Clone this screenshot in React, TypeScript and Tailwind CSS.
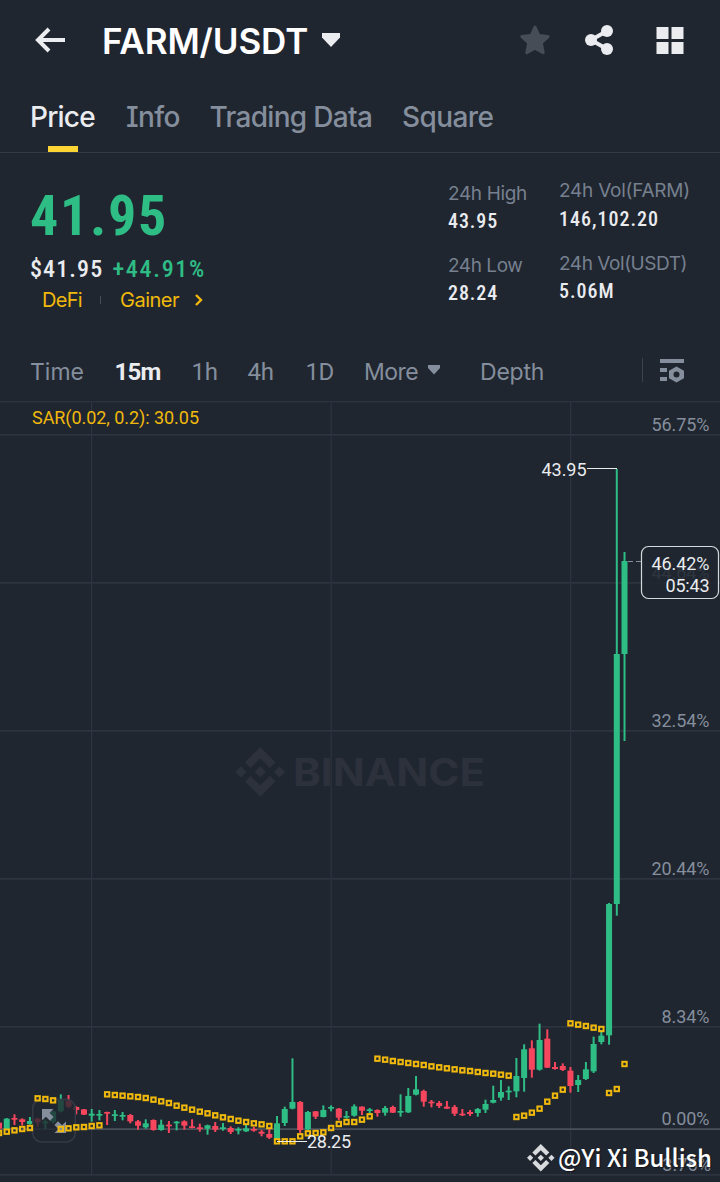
type Candle = [top: number, bottom: number, high: number, low: number, up: 0 | 1];

const STEP = 7.722;
const ORIGIN = 6.75;
const xAt = (i: number) => ORIGIN + i * STEP;

// Each group holds consecutive candles; values are thirds of a pixel below `base`.
const groups: { first: number; base: number; bars: Candle[] }[] = [
  {
    first: -1,
    base: 1040,
    bars: [
      [248, 266, 243, 268, 0],
      [236, 268, 234, 270, 1],
      [234, 239, 223, 255, 0],
      [238, 246, 235, 256, 0],
      [243, 252, 231, 254, 1],
      [236, 247, 233, 260, 0],
      [245, 250, 238, 267, 1],
      [214, 245, 212, 250, 1],
      [180, 214, 163, 217, 1],
      [182, 200, 165, 204, 0],
      [201, 210, 199, 223, 0],
      [208, 224, 207, 225, 0],
      [221, 227, 207, 245, 1],
      [222, 227, 210, 241, 1],
      [216, 221, 215, 255, 0],
      [223, 228, 210, 243, 1],
      [225, 230, 216, 241, 1],
      [225, 244, 222, 250, 0],
      [244, 257, 240, 269, 0],
      [250, 262, 238, 266, 1],
      [240, 270, 238, 272, 0],
      [254, 270, 239, 272, 1],
      [254, 259, 243, 279, 0],
      [245, 250, 243, 271, 1],
      [244, 257, 241, 269, 0],
      [259, 264, 238, 265, 0],
      [262, 267, 251, 275, 0],
      [256, 266, 254, 284, 1],
      [258, 269, 246, 276, 0],
      [262, 267, 249, 272, 1],
      [264, 276, 259, 282, 0],
      [267, 272, 262, 283, 1],
      [265, 274, 252, 276, 1],
      [267, 272, 261, 275, 0],
      [275, 281, 270, 289, 0],
      [282, 293, 267, 297, 0],
      [250, 296, 228, 300, 1],
      [207, 249, 200, 258, 1],
      [186, 206, 55, 208, 1],
      [186, 270, 183, 280, 0],
      [216, 268, 213, 272, 1],
      [214, 230, 213, 237, 0],
      [210, 231, 196, 232, 1],
      [201, 206, 196, 214, 1],
      [206, 233, 204, 241, 0],
      [228, 233, 213, 236, 1],
      [199, 227, 193, 230, 1],
    ],
  },
  {
    first: 46,
    base: 1010,
    bars: [
      [290, 302, 289, 315, 0],
      [298, 303, 294, 310, 1],
      [300, 309, 298, 320, 0],
      [294, 308, 288, 317, 1],
      [291, 308, 287, 309, 0],
      [303, 308, 253, 320, 1],
      [258, 307, 234, 309, 1],
      [238, 254, 198, 256, 1],
      [243, 275, 239, 290, 0],
      [275, 280, 270, 292, 0],
      [279, 288, 273, 294, 0],
      [290, 296, 273, 297, 0],
      [291, 311, 285, 318, 0],
      [311, 316, 297, 318, 0],
      [306, 312, 300, 318, 0],
      [297, 309, 294, 320, 1],
      [282, 299, 269, 309, 1],
      [270, 278, 227, 280, 1],
      [246, 263, 210, 272, 1],
      [242, 247, 229, 270, 1],
      [198, 244, 144, 262, 1],
      [118, 204, 103, 245, 1],
      [115, 179, 91, 203, 0],
      [90, 179, 41, 182, 1],
      [86, 173, 58, 174, 0],
      [171, 177, 156, 179, 0],
      [168, 180, 160, 183, 0],
      [182, 228, 171, 248, 0],
      [210, 225, 195, 246, 1],
      [178, 207, 156, 210, 1],
      [102, 184, 80, 189, 1],
      [77, 96, 60, 103, 1],
      [-318, 76, -321, 104, 1],
      [-1068, -318, -1623, -283, 1],
      [-1347, -1068, -1374, -807, 1],
    ],
  },
];

const sar: { first: number; base: number; ys: number[] }[] = [
  { first: -1, base: 1040, ys: [279, 275, 271, 267, 264] },
  { first: 4, base: 1040, ys: [175, 177, 181] },
  { first: 7, base: 1040, ys: [267, 265, 262, 261, 258, 256] },
  {
    first: 13,
    base: 1040,
    ys: [163, 165, 167, 169, 171, 174, 179, 184, 189, 197, 203, 209, 215, 220, 226, 232, 237, 242, 246, 250, 253, 258],
  },
  { first: 35, base: 1040, ys: [304, 304, 304, 289, 280, 279, 277, 264, 252, 246, 246, 239, 229] },
  {
    first: 48,
    base: 1010,
    ys: [146, 149, 153, 156, 159, 162, 165, 169, 172, 175, 178, 181, 183, 186, 189, 191, 194, 197],
  },
  { first: 66, base: 1010, ys: [321, 317, 308, 296, 275, 257, 239] },
  { first: 73, base: 1010, ys: [40, 44, 48, 53, 57] },
  { first: 78, base: 1010, ys: [249, 237, 162] },
];

const scale: [string, number, number, number][] = [
  ["56.75%", 651.5, 431, 58],
  ["32.54%", 651.5, 727, 58],
  ["20.44%", 651.5, 875, 58],
  ["8.34%", 661.5, 1023, 48],
  ["0.00%", 661.5, 1125, 48],
  ["-3.76%", 657, 1171, 54],
];

const LOGO =
  "M38.73 53.2l24.59-24.58 24.6 24.6 14.3-14.31L63.32 0l-38.9 38.9zM0 63.31l14.3-14.31 14.31 14.31-14.31 14.3zM38.73 73.41l24.59 24.59 24.6-24.6 14.31 14.29-38.9 38.91-38.91-38.88zM98 63.31l14.3-14.31 14.31 14.3-14.31 14.32zM77.83 63.3L63.32 48.78 48.81 63.28l14.51 14.5z";

function Header() {
  return (
    <header className="flex h-[82px] items-center pt-px pl-[35px]">
      <svg width="31" height="26" viewBox="0 0 31 26" className="-mt-[3px] shrink-0" fill="none" stroke="#eaecef" strokeWidth="4">
        <path d="M2 13h28M14 2L3 13l11 11" />
      </svg>
      <h1 className="ml-9 w-[220px] text-[35px] leading-none font-semibold tracking-[-0.1px] whitespace-nowrap text-white">
        FARM/USDT
      </h1>
      <svg width="18" height="14" viewBox="0 0 18 14" className="-mt-[3px] shrink-0" fill="#eaecef">
        <path d="M0 0h18v4.5L9 14 0 4.5z" />
      </svg>
      <svg width="32" height="32" viewBox="0 0 32 32" className="-mt-[3px] ml-[179px] shrink-0">
        <path
          d="M16 3l3.9 8.6 9.2 1-6.8 6.3 1.9 9.8-8.2-4.6-8.2 4.6 1.9-9.8-6.8-6.3 9.2-1z"
          fill="#474d57"
          stroke="#474d57"
          strokeWidth="3"
          strokeLinejoin="round"
        />
      </svg>
      <svg width="30" height="32" viewBox="0 0 30 32" className="-mt-[3px] ml-[33px] shrink-0" fill="#eaecef">
        <path d="M23 7L7 16l16 9" fill="none" stroke="#eaecef" strokeWidth="4" />
        <circle cx="7" cy="16" r="6" />
        <circle cx="23" cy="7" r="6" />
        <circle cx="23" cy="25" r="6" />
      </svg>
      <svg width="28" height="28" viewBox="0 0 28 28" className="-mt-[2px] ml-[42px] shrink-0" fill="#eaecef">
        <path d="M0.500 0h12v12H0.500zM15.500 0h12v12H15.500zM0.500 15h12v12H0.500zM15.500 15h12v12H15.500z" />
      </svg>
    </header>
  );
}

function Tabs() {
  return (
    <nav className="flex h-[71px] border-b border-[#333b47] pt-[15px] pl-[30px] text-[28px] leading-10 font-medium whitespace-nowrap text-[#848e9c]">
      <div className="w-[96px] text-[#eaecef]">
        <div className="tracking-[-0.8px]">Price</div>
        <div className="mt-[9px] ml-[18px] h-[6px] w-[30px] bg-[#fcd535]" />
      </div>
      <div className="w-[83.5px] tracking-[-0.6px] [font-feature-settings:'cv08']">Info</div>
      <div className="w-[192.5px] tracking-[-0.7px]">Trading Data</div>
      <div className="tracking-[-0.6px]">Square</div>
    </nav>
  );
}

function Stat({ label, value, labelSpacing, spacing }: { label: string; value: string; labelSpacing: string; spacing: string }) {
  return (
    <div className="whitespace-nowrap">
      <div className={`text-[19px] leading-6 text-[#76808f] ${labelSpacing}`}>{label}</div>
      <div className={`font-['Roboto'] text-[20px] leading-7 font-medium text-[#eaecef] font-stretch-[85%] ${spacing}`}>
        {value}
      </div>
    </div>
  );
}

function Summary() {
  return (
    <section className="flex h-[188px] pl-[30px]">
      <div className="w-[418px] pt-[31px] whitespace-nowrap">
        <div className="h-16 font-['Roboto'] text-[56px] leading-16 font-bold tracking-[1.7px] text-[#2ebd85] font-stretch-[85%]">
          41.95
        </div>
        <div className="mt-[7px] flex h-7 font-['Roboto'] text-[24px] leading-7 font-medium font-stretch-[85%]">
          <span className="w-[82.5px] tracking-[1.1px] text-[#eaecef]">$41.95</span>
          <span className="tracking-[1.7px] text-[#2ebd85]">+44.91%</span>
        </div>
        <div className="mt-[5px] flex h-6 items-center pl-3 text-[20px] leading-6 text-[#f0b90b]">
          <span className="w-[58px] tracking-[-0.7px]">DeFi</span>
          <span className="h-2 w-px bg-[#474d57]" />
          <span className="ml-[19px] w-[75px] tracking-[-0.5px]">Gainer</span>
          <svg width="8" height="12" viewBox="0 0 8 12" fill="none" stroke="#f0b90b" strokeWidth="2.4">
            <path d="M1 1l5 5-5 5" />
          </svg>
        </div>
      </div>
      <div className="flex w-[111px] flex-col gap-[19px] pt-[29px]">
        <Stat label="24h High" value="43.95" labelSpacing="tracking-[-0.35px]" spacing="pt-[1px] tracking-[0.9px]" />
        <Stat label="24h Low" value="28.24" labelSpacing="tracking-[-0.45px]" spacing="pt-[1px] tracking-[0.9px]" />
      </div>
      <div className="flex flex-col gap-[19px] pt-[26px]">
        <Stat label="24h Vol(FARM)" value="146,102.20" labelSpacing="tracking-[-0.25px]" spacing="pt-[2px] tracking-[1px]" />
        <Stat label="24h Vol(USDT)" value="5.06M" labelSpacing="tracking-[-0.45px]" spacing="pt-[1px] tracking-[1px]" />
      </div>
    </section>
  );
}

function Intervals() {
  return (
    <nav className="flex h-[60px] items-center pt-px pl-[30px] text-[23px] leading-none whitespace-nowrap text-[#848e9c]">
      <span className="w-[84.5px] pt-px">Time</span>
      <span className="w-[77px] pt-px font-['Roboto'] text-[24px] font-bold tracking-[-0.8px] text-[#eaecef]">15m</span>
      <span className="w-[56px] pt-px font-['Roboto'] text-[24px] tracking-[-0.3px]">1h</span>
      <span className="w-[58px] pt-px font-['Roboto'] text-[24px] tracking-[-0.3px]">4h</span>
      <span className="w-[58.5px] pt-px font-['Roboto'] text-[24px] tracking-[-0.6px]">1D</span>
      <span className="w-[63px] pt-px tracking-[-0.5px]">More</span>
      <svg width="14" height="10" viewBox="0 0 14 10" className="-mt-1 shrink-0" fill="#848e9c">
        <path d="M1 0h12v3L7 9.500 1 3z" />
      </svg>
      <span className="ml-[39px] w-[162px] pt-px tracking-[-0.2px]">Depth</span>
      <span className="-mt-1 h-6 w-px bg-[#3a424e]" />
      <svg width="25" height="26" viewBox="0 0 25 26" className="-mt-px ml-[17px] shrink-0" fill="#848e9c">
        <path d="M0 1h24v4H0zM0 10h7v4H0zM0 19h7v4H0z" />
        <path
          fillRule="evenodd"
          d="M16.500 8.500l7.500 4.200v7.600l-7.500 4.200-7.500-4.200v-7.600zM16.500 13.500a3 3 0 100 6 3 3 0 000-6z"
        />
      </svg>
    </nav>
  );
}

function Chart() {
  return (
    <svg width="720" height="781" viewBox="0 401 720 781" className="block font-['Roboto'] text-[18px]">
      <g fill="#2c313c">
        <path d={LOGO} transform="translate(235.300 747) scale(0.393)" />
        <text x="293" y="786" textLength="192" lengthAdjust="spacingAndGlyphs" className="font-['Inter'] text-[38px] font-bold">
          BINANCE
        </text>
      </g>

      <g fill="#2d333f">
        {[400.5, 434, 582, 730, 878, 1026, 1174].map((y) => (
          <rect key={y} x="0" y={y} width="720" height="1.800" />
        ))}
        {[91, 330.5, 570].map((x) => (
          <rect key={x} x={x} y="402" width="1.300" height="773" />
        ))}
      </g>
      <rect x="0" y="1128.300" width="720" height="1.600" fill="#4f5560" />

      {groups.map((g) =>
        g.bars.map(([top, bottom, high, low, up], k) => {
          const x = xAt(g.first + k);
          return (
            <g key={g.first + k} fill={up ? "#2ebd85" : "#f6465d"}>
              <rect x={x - 1} y={g.base + high / 3} width="2" height={(low - high) / 3} />
              <rect x={x - 3} y={g.base + top / 3} width="6" height={(bottom - top) / 3} />
            </g>
          );
        }),
      )}

      <rect x="32.700" y="1099.500" width="42.600" height="42.500" rx="9" fill="#202630" fillOpacity="0.78" stroke="#343a45" strokeWidth="1.500" />
      <g fill="#848e9c">
        <path d="M42 1109h11.500l-3.900 3.900 4 4-3.600 3.800-4.100-4-3.900 3.900z" />
        <path d="M66 1133H54.500l3.900-3.900-4-4 3.600-3.800 4.100 4 3.900-3.900z" />
      </g>

      <g fill="none" stroke="#f0b90b" strokeWidth="2">
        {sar.map((s) =>
          s.ys.map((y, k) => (
            <rect key={s.first + k} x={xAt(s.first + k) - 2.2} y={s.base + y / 3 - 2.2} width="4.400" height="4.400" />
          )),
        )}
      </g>

      <text x="32" y="424" textLength="167" fill="#f0b90b">
        SAR(0.02, 0.2): 30.05
      </text>
      <path d="M587 468.500h30M277 1141.500h30" stroke="#eaecef" strokeWidth="1.200" />
      <path d="M628 561.500h13" stroke="#848e9c" strokeWidth="1.200" strokeDasharray="5 3" />
      <g fill="#eaecef">
        <text x="541.500" y="476" textLength="45">43.95</text>
        <text x="307" y="1148" textLength="44">28.25</text>
      </g>
      <g fill="#848e9c">
        {scale.map(([label, x, y, w]) => (
          <text key={label} x={x} y={y} textLength={w}>
            {label}
          </text>
        ))}
        <text x="651.500" y="579" textLength="58">44.64%</text>
      </g>
      <rect x="641.500" y="546.500" width="77" height="52" rx="7" fill="#202630" fillOpacity="0.86" stroke="#d5d8dd" strokeWidth="1.200" />
      <g fill="#eaecef">
        <text x="651.500" y="570" textLength="58">46.42%</text>
        <text x="665.500" y="592" textLength="44">05:43</text>
      </g>

      <path d={LOGO} transform="translate(527 1144) scale(0.218)" fill="#d9dadd" />
      <text
        x="558"
        y="1166.500"
        textLength="154"
        lengthAdjust="spacingAndGlyphs"
        fill="#ffffff"
        className="font-['Noto_Sans_CJK_SC',sans-serif] text-[24px] font-medium [text-shadow:1px_1px_1px_#00000080]"
      >
        @Yi Xi Bullish
      </text>
    </svg>
  );
}

export default function App() {
  return (
    <main className="h-[1182px] w-[720px] overflow-hidden bg-[#202630] font-['Inter',sans-serif]">
      <Header />
      <Tabs />
      <Summary />
      <Intervals />
      <Chart />
    </main>
  );
}
